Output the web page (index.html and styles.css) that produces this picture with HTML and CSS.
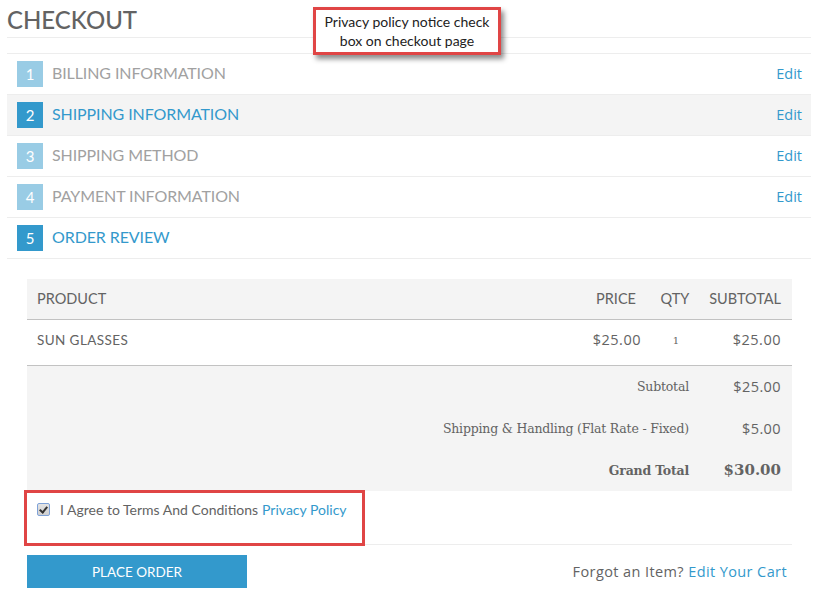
FILE: index.html
```html
<!DOCTYPE html>
<html>
<head>
<meta charset="utf-8">
<link rel="stylesheet" href="styles.css">
</head>
<body>
<div class="page">
  <h1 class="title">Checkout</h1>
  <ol class="steps">
    <li class="step"><span class="num">1</span><span class="label">Billing Information</span><a class="edit">Edit</a></li>
    <li class="step active alt"><span class="num">2</span><span class="label">Shipping Information</span><a class="edit">Edit</a></li>
    <li class="step"><span class="num">3</span><span class="label">Shipping Method</span><a class="edit">Edit</a></li>
    <li class="step"><span class="num">4</span><span class="label">Payment Information</span><a class="edit">Edit</a></li>
    <li class="step active"><span class="num">5</span><span class="label">Order Review</span></li>
  </ol>
  <div class="review">
    <table class="items">
      <thead>
        <tr><th class="c-prod">Product</th><th class="c-price">Price</th><th class="c-qty">Qty</th><th class="c-sub">Subtotal</th></tr>
      </thead>
      <tbody>
        <tr><td class="c-prod name">Sun Glasses</td><td class="c-price money">$25.00</td><td class="c-qty qty">1</td><td class="c-sub money">$25.00</td></tr>
      </tbody>
      <tfoot>
        <tr><td colspan="3" class="t-label">Subtotal</td><td class="t-val">$25.00</td></tr>
        <tr><td colspan="3" class="t-label">Shipping &amp; Handling (Flat Rate - Fixed)</td><td class="t-val">$5.00</td></tr>
        <tr class="grand"><td colspan="3" class="t-label">Grand Total</td><td class="t-val">$30.00</td></tr>
      </tfoot>
    </table>
    <div class="agree">
      <label class="agree-label"><input class="check" type="checkbox" checked> <span>I Agree to Terms And Conditions</span> <a class="link">Privacy Policy</a></label>
      <div class="highlight"></div>
    </div>
    <div class="actions">
      <button class="place">Place Order</button>
      <p class="forgot">Forgot an Item? <a class="link">Edit Your Cart</a></p>
    </div>
  </div>
  <div class="note">Privacy policy notice check<br>box on checkout page</div>
</div>
</body>
</html>
```

FILE: styles.css
```css
* { box-sizing: border-box; }
html, body { margin: 0; padding: 0; background: #fff; }
body { font-family: "Open Sans", sans-serif; color: #636363; width: 814px; height: 594px; overflow: hidden; }
.page { position: relative; padding: 0 3px 0 7px; }
.title {
  margin: 0;
  height: 38px;
  padding-top: 5px;
  font-family: Lato, "Open Sans", sans-serif;
  font-weight: 500;
  font-size: 24px;
  line-height: 30px;
  text-transform: uppercase;
  color: #636363;
  border-bottom: 1px solid #ededed;
}
.steps { list-style: none; margin: 15px 0 0; padding: 0; border-top: 1px solid #ededed; }
.step {
  display: flex;
  align-items: center;
  height: 41px;
  padding: 0 9px 0 10px;
  border-bottom: 1px solid #ededed;
}
.step.alt { background: #f4f4f4; }
.num {
  width: 26px; height: 26px;
  background: #99cce5;
  color: #fff;
  font-family: Lato, sans-serif;
  font-size: 15px;
  display: flex; align-items: center; justify-content: center;
}
.label {
  margin-left: 9px;
  flex: 1;
  font-family: Lato, sans-serif;
  font-size: 16px;
  line-height: 20px;
  padding-bottom: 3px;
  letter-spacing: -0.1px;
  text-transform: uppercase;
  color: #a1a1a1;
}
.step.active .num { background: #3399cc; }
.step.active .label { color: #3399cc; }
.edit { color: #3399cc; font-size: 14.5px; padding-bottom: 2px; }
.review { padding: 20px 19px 0 20px; }
.items { width: 100%; border-collapse: collapse; }
.items thead tr { background: #f4f4f4; height: 40px; border-bottom: 1px solid #c2c2c2; }
.items th {
  font-family: Lato, sans-serif;
  font-weight: 400;
  font-size: 14.5px;
  text-transform: uppercase;
  color: #636363;
  padding: 0 11px 0 10px;
  text-align: right;
}
.items th.c-prod { text-align: left; }
.items th.c-price { padding-right: 16px; }
.items th.c-qty { text-align: center; padding: 0; }
.items tbody tr { height: 46px; border-bottom: 1px solid #c2c2c2; }
.items td { padding: 0 11px 5px 10px; }
.name { font-family: Lato, sans-serif; font-size: 13.5px; letter-spacing: 0.4px; text-transform: uppercase; }
.money { text-align: right; font-size: 14.5px; letter-spacing: 0.5px; }
.items td.qty { text-align: center; font-family: "DejaVu Serif", serif; font-size: 10px; padding: 0 0 4px 2px; }
.c-price { width: 90px; }
.c-qty { width: 46px; }
.c-sub { width: 94px; }
.items tfoot tr { background: #f4f4f4; height: 42px; }
.items tfoot td { padding: 0 11px 0 10px; }
.items tfoot td.t-label { text-align: right; font-family: "DejaVu Serif", serif; font-size: 12.5px; letter-spacing: -0.2px; padding-right: 9px; }
.t-val { text-align: right; font-size: 14.5px; letter-spacing: 0.4px; }
.grand .t-label { font-weight: bold; font-size: 13px; }
.grand .t-val { font-family: "DejaVu Serif", serif; font-weight: bold; font-size: 15px; letter-spacing: 0; }
.agree { position: relative; height: 54px; border-bottom: 1px solid #ededed; padding: 10px 0 0 10px; }
.agree-label { display: flex; align-items: center; font-family: Lato, sans-serif; font-size: 14px; color: #636363; }
.check {
  appearance: none;
  -webkit-appearance: none;
  margin: 0 10px 0 0;
  width: 13px; height: 13px;
  border: 1px solid #7fa2d8;
  border-radius: 2px;
  background: linear-gradient(#e4e4e4, #cfcfcf);
  position: relative;
}
.check::after {
  content: "";
  position: absolute;
  left: 3px; top: 1px;
  width: 3px; height: 6px;
  border: solid #333;
  border-width: 0 2px 2px 0;
  transform: rotate(40deg);
}
.agree-label .link { margin-left: 4px; }
.link { color: #3399cc; }
.highlight {
  position: absolute;
  left: -3px; top: -1px;
  width: 341px; height: 56px;
  border: 3px solid #e04545;
}
.actions { display: flex; justify-content: space-between; align-items: center; margin-top: 10px; }
.place {
  width: 220px; height: 33px;
  border: 0;
  background: #3399cc;
  color: #fff;
  font-family: Lato, sans-serif;
  font-size: 13.5px;
  text-transform: uppercase;
  padding: 0;
}
.forgot { margin: 0 5px 0 0; font-size: 14.5px; letter-spacing: 0.4px; color: #636363; }
.note {
  position: absolute;
  left: 313px; top: 7px;
  width: 188px; height: 48px;
  border: 3px solid #e04545;
  background: #fff;
  box-shadow: 3px 4px 5px rgba(0,0,0,0.45);
  text-align: center;
  font-family: Lato, sans-serif;
  font-size: 14px;
  line-height: 19px;
  color: #222;
  padding-top: 2px;
}
```
